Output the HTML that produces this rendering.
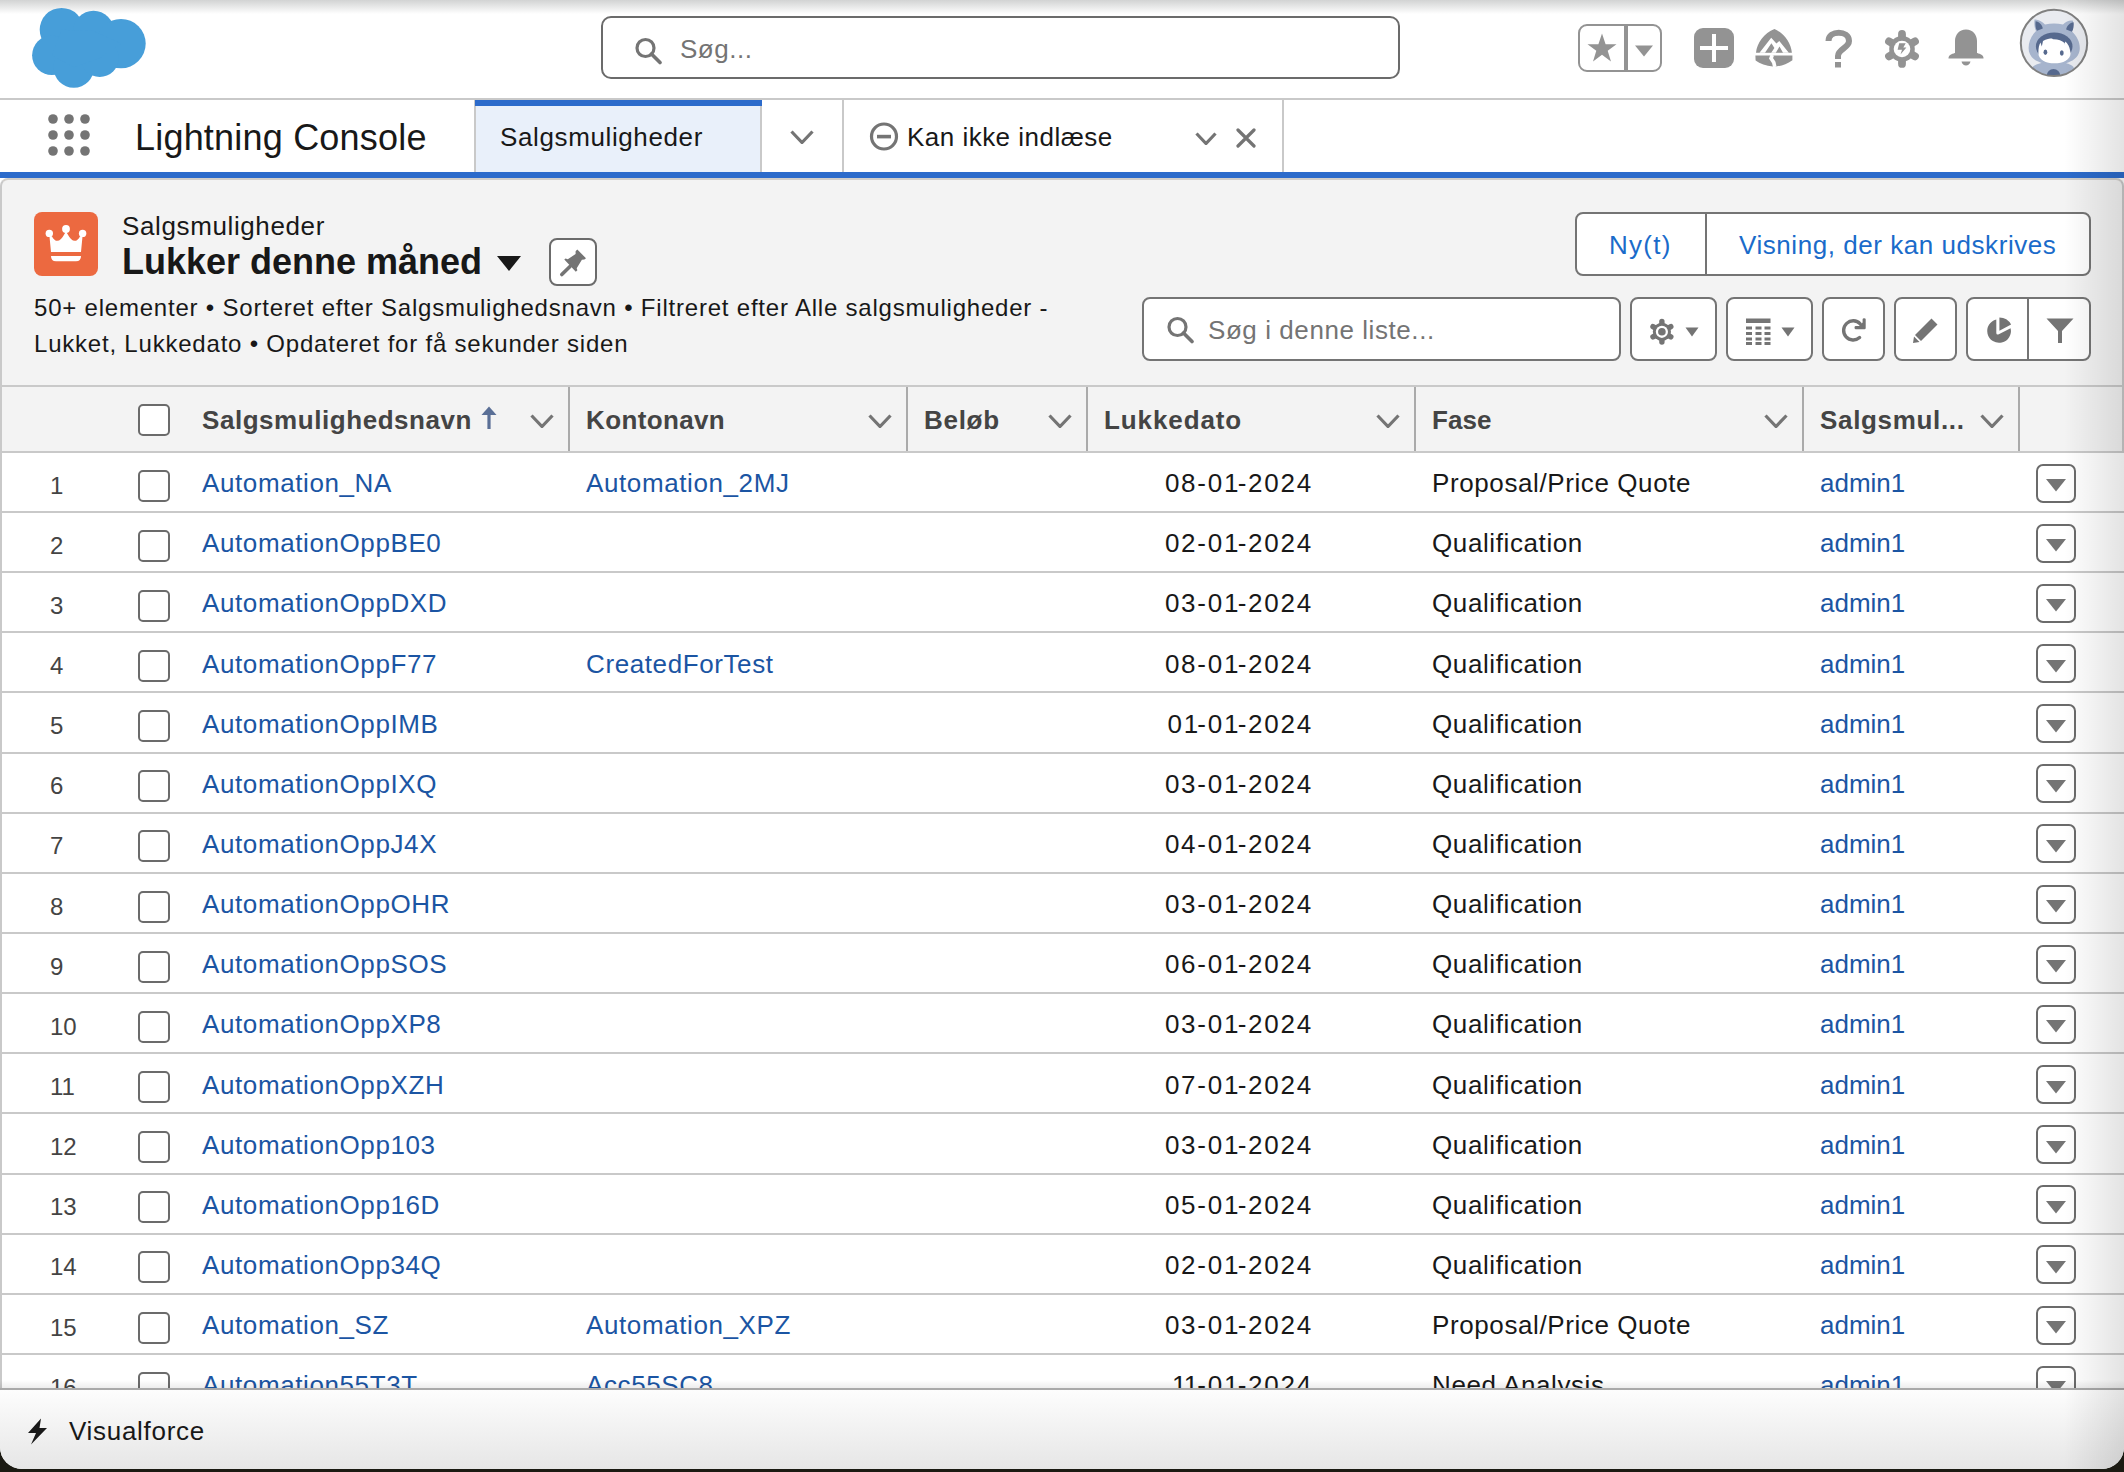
<!DOCTYPE html><html><head><meta charset="utf-8"><style>
*{margin:0;padding:0;box-sizing:border-box}
html,body{width:2124px;height:1472px;overflow:hidden;background:#1b1a12}
body{position:relative;font-family:"Liberation Sans",sans-serif;color:#181818}
.a{position:absolute}
.t{position:absolute;white-space:nowrap}
#win{position:absolute;left:0;top:0;width:2124px;height:1469px;background:#fff;border-radius:0 0 22px 22px;overflow:hidden}
#topshade{position:absolute;left:0;top:0;width:2124px;height:14px;background:linear-gradient(#d2d3d3,rgba(255,255,255,0))}
#rightshade{position:absolute;right:0;top:0;width:60px;height:1469px;background:linear-gradient(90deg,rgba(0,0,0,0),rgba(0,0,0,.11));pointer-events:none}
.gline{position:absolute;background:#c9c9c9}
.btn{position:absolute;background:#fff;border:2px solid #747474;border-radius:8px}
.cb{position:absolute;width:32px;height:32px;border:2px solid #6b6b6b;border-radius:5px;background:#fff}
.hd{position:absolute;font-weight:bold;font-size:26px;color:#444;line-height:30px;top:405px;letter-spacing:0.55px;white-space:nowrap}
.link{color:#1b55a3}
.cell{position:absolute;font-size:26px;line-height:30px;white-space:nowrap;letter-spacing:0.6px}
.num{position:absolute;font-size:24px;line-height:30px;color:#444}
.rbtn{position:absolute;left:2036px;width:40px;height:39px;border:2px solid #6b6b6b;border-radius:7px;background:#fff}
</style></head><body><div id="win">
<div id="topshade"></div>
<svg class="a" style="left:0;top:0" width="160" height="96" viewBox="0 0 160 96"><g fill="#479ed9">
<circle cx="61.6" cy="29.8" r="21.9"/><circle cx="93.5" cy="31.1" r="20.4"/><circle cx="121" cy="43.6" r="24.7"/>
<circle cx="51.9" cy="55.3" r="19.8"/><circle cx="73.8" cy="67.3" r="20.4"/><circle cx="99.7" cy="58" r="19"/>
<polygon points="61.6,29.8 93.5,31.1 121,43.6 99.7,58 73.8,67.3 51.9,55.3"/></g></svg>
<div class="a" style="left:601px;top:16px;width:799px;height:63px;border:2px solid #6b6b6b;border-radius:10px;background:#fff"></div>
<svg class="a" style="left:634px;top:37px" width="30" height="28" viewBox="0 0 30 28"><circle cx="11.5" cy="11" r="8.5" fill="none" stroke="#747474" stroke-width="3.2"/><path d="M17.5 17 L26 25.5" stroke="#747474" stroke-width="3.6" stroke-linecap="round"/></svg>
<div class="t" style="left:680px;top:34px;font-size:26px;line-height:30px;color:#747474;letter-spacing:0.5px">Søg...</div>
<div class="a" style="left:1578px;top:24px;width:84px;height:48px;border:2px solid #939393;border-radius:9px;background:#fff"></div>
<div class="a" style="left:1624px;top:25px;width:4px;height:46px;background:#939393"></div>
<svg class="a" style="left:1586px;top:32px" width="32" height="32" viewBox="0 0 32 32"><path fill="#939393" d="M16 1.5 L19.6 12.3 L30.5 12.3 L21.7 18.8 L25 29.5 L16 22.8 L7 29.5 L10.3 18.8 L1.5 12.3 L12.4 12.3 Z"/></svg>
<svg class="a" style="left:1634px;top:45px" width="20" height="12" viewBox="0 0 20 12"><path fill="#939393" d="M1 0.5 H19 L10 11.5 Z"/></svg>
<div class="a" style="left:1694px;top:28px;width:40px;height:40px;border-radius:9px;background:#939393"></div>
<div class="a" style="left:1700px;top:46px;width:28px;height:4px;background:#fff"></div>
<div class="a" style="left:1712px;top:34px;width:4px;height:28px;background:#fff"></div>
<svg class="a" style="left:1750px;top:24px" width="48" height="48" viewBox="0 0 48 48">
<path fill="#939393" d="M6 28.7 C7 19 14 9 24.5 5 C34 9 41 19 41.9 28.7 Z M5.4 31.6 H42.4 V36.2 C37 40 32 42 26 42.4 H23 C16 42 10 40 5.6 36.5 Z"/>
<path fill="#fff" d="M9.5 28.7 L21.2 13.8 L26.4 19.6 L29.3 17 L38.8 28.7 Z"/>
<path fill="#939393" d="M15 28.7 L21.4 19.2 L24.4 24 L21.2 28.7 Z M25.8 28.7 L29.5 22.6 L33 28.7 Z"/>
<path fill="none" stroke="#fff" stroke-width="3.6" d="M22.3 31 L21 34.2 L23.8 38.5 L24.8 43"/></svg>
<svg class="a" style="left:1824px;top:28px" width="30" height="40" viewBox="0 0 30 40"><path fill="none" stroke="#939393" stroke-width="6" d="M4.5 13 C4.5 2 25 2 25 13 C25 20 14 21 14 28 V31"/><rect x="11" y="34" width="6" height="5.5" fill="#939393"/></svg>
<svg class="a" style="left:1878px;top:24px" width="48" height="48" viewBox="0 0 48 48">
<g stroke="#939393" stroke-width="7.8" stroke-linecap="round"><line x1="24" y1="24.9" x2="24.00" y2="9.90"/><line x1="24" y1="24.9" x2="36.99" y2="17.40"/><line x1="24" y1="24.9" x2="36.99" y2="32.40"/><line x1="24" y1="24.9" x2="24.00" y2="39.90"/><line x1="24" y1="24.9" x2="11.01" y2="32.40"/><line x1="24" y1="24.9" x2="11.01" y2="17.40"/></g>
<circle cx="24" cy="24.9" r="12.8" fill="#939393"/>
<circle cx="24" cy="25" r="8.3" fill="#fff"/>
<path fill="#939393" d="M21.2 19.2 H27.7 L25.3 23.5 H28.4 L22.5 30.6 L24 25.8 H19.6 Z"/></svg>
<svg class="a" style="left:1946px;top:29px" width="40" height="40" viewBox="0 0 40 40"><path fill="#939393" d="M20 0.5 C27 0.5 31 6 31 12 V24 C31 24 33 24.5 35 25.5 C37 26.5 37.5 28 37.5 29 V29.5 H2.5 V29 C2.5 28 3 26.5 5 25.5 C7 24.5 9 24 9 24 V12 C9 6 13 0.5 20 0.5 Z M15.5 32.5 H24.5 C24 35 22 36.5 20 36.5 C18 36.5 16 35 15.5 32.5 Z"/></svg>
<svg class="a" style="left:2016px;top:6px" width="76" height="76" viewBox="0 0 76 76">
<defs><clipPath id="avc"><circle cx="38" cy="36.9" r="33"/></clipPath></defs>
<circle cx="38" cy="36.9" r="33" fill="#e9ebf0"/>
<g clip-path="url(#avc)">
<path fill="#a6b4cd" d="M14 80 L17 60.5 C24 54 52 54 57.5 61 L62 80 Z"/>
<path fill="#a6b4cd" d="M18.5 13.5 C22 13 26 15.5 29 18.5 C35 17 41 17 47 18.5 C50 15.5 54 14 57 14.8 C57.5 19 56.5 23 55.5 25 C61 30 63.8 36 63.8 42 C63.8 53 53 58.5 38.2 58.5 C23 58.5 12.6 53 12.6 42 C12.6 36 15 30 20 25 C18.5 22 18 18 18.5 13.5 Z"/>
<path fill="#56698e" d="M19.6 15.2 C23 15.5 26.5 19 26.8 22.5 L21 24.8 C19.5 22 19.2 18.5 19.6 15.2 Z M57.6 16.2 C54 16.5 50.5 20 50.2 23.5 L56 25.8 C57.5 23 58 19.5 57.6 16.2 Z"/>
<ellipse cx="38.2" cy="40.5" rx="18.3" ry="14" fill="#56698e"/>
<path fill="#fff" d="M22.4 47 C22.4 42 23 39 24.5 36.5 L25.8 40.5 L27 35 C30 33 34 32.5 36 32.5 C37.5 33.5 38.5 34.5 40 35.8 C38.5 35.5 37.5 34 36.5 33.2 C42 33 46 34.5 48.5 37 L48 38.8 L49.5 35.5 C52 38 53.5 41 54 44 L54.6 47 C54.6 54 47 57.3 38.5 57.3 C30 57.3 22.4 54 22.4 47 Z"/>
<ellipse cx="29.4" cy="46.2" rx="1.9" ry="2.7" fill="#56698e"/><ellipse cx="45.8" cy="47" rx="1.9" ry="2.7" fill="#56698e"/>
<circle cx="37.5" cy="69.8" r="6.8" fill="#56698e"/>
</g>
<circle cx="38" cy="36.9" r="33.2" fill="none" stroke="#808080" stroke-width="2"/></svg>
<div class="gline" style="left:0;top:98px;width:2124px;height:2px"></div>
<svg class="a" style="left:48px;top:114px" width="44" height="44" viewBox="0 0 44 44"><g fill="#747474"><circle cx="5" cy="5" r="4.8"/><circle cx="5" cy="21" r="4.8"/><circle cx="5" cy="37" r="4.8"/><circle cx="21" cy="5" r="4.8"/><circle cx="21" cy="21" r="4.8"/><circle cx="21" cy="37" r="4.8"/><circle cx="37" cy="5" r="4.8"/><circle cx="37" cy="21" r="4.8"/><circle cx="37" cy="37" r="4.8"/></g></svg>
<div class="t" style="left:135px;top:118px;font-size:36px;line-height:40px;color:#181818;letter-spacing:0.2px">Lightning Console</div>
<div class="a" style="left:474px;top:100px;width:288px;height:72px;background:#e9f0fa;border-left:2px solid #c9c9c9;border-right:2px solid #c9c9c9"></div>
<div class="a" style="left:475px;top:100px;width:287px;height:6px;background:#2c6bcb"></div>
<div class="t" style="left:500px;top:122px;font-size:26px;line-height:30px;letter-spacing:0.62px">Salgsmuligheder</div>
<svg class="a" style="left:790px;top:130px" width="24" height="14" viewBox="0 0 24 14"><path d="M1.5 1.5 L12.0 12.5 L22.5 1.5" fill="none" stroke="#747474" stroke-width="3.2"/></svg>
<div class="gline" style="left:842px;top:100px;width:2px;height:72px"></div>
<svg class="a" style="left:868px;top:121px" width="32" height="32" viewBox="0 0 32 32"><circle cx="16" cy="15.5" r="12.5" fill="none" stroke="#747474" stroke-width="3.2"/><rect x="9" y="13.8" width="14" height="3.6" fill="#747474"/></svg>
<div class="t" style="left:907px;top:122px;font-size:26px;line-height:30px;letter-spacing:0.48px">Kan ikke indlæse</div>
<svg class="a" style="left:1195px;top:132px" width="22" height="13" viewBox="0 0 22 13"><path d="M1.5 1.5 L11.0 11.5 L20.5 1.5" fill="none" stroke="#747474" stroke-width="3.2"/></svg>
<svg class="a" style="left:1236px;top:128px" width="20" height="20" viewBox="0 0 20 20"><path d="M2 2 L18 18 M18 2 L2 18" stroke="#747474" stroke-width="3.2" stroke-linecap="round"/></svg>
<div class="gline" style="left:1282px;top:100px;width:2px;height:72px"></div>
<div class="a" style="left:0;top:172px;width:2124px;height:6px;background:#2c6bcb"></div>
<div class="a" style="left:0;top:178px;width:2124px;height:1212px;background:#f3f3f3;border:2px solid #c9c9c9;border-top-color:#d1ceca;border-radius:8px 8px 0 0"></div>
<div class="a" style="left:34px;top:212px;width:64px;height:64px;background:#ec6940;border-radius:8px"></div>
<svg class="a" style="left:34px;top:212px" width="64" height="64" viewBox="0 0 64 64"><g fill="#fff"><circle cx="15.3" cy="21.4" r="3.7"/><circle cx="32" cy="17" r="3.9"/><circle cx="48.6" cy="21.4" r="3.7"/><path d="M15.4 23.5 L17 40 H47 L48.6 23.5 L46 24.4 Q40.3 34.6 33.2 21.4 L32 19 L30.8 21.4 Q23.7 34.6 18 24.4 Z"/><path d="M17 44 H47 Q47 49.3 42 49.3 H22 Q17 49.3 17 44 Z"/></g></svg>
<div class="t" style="left:122px;top:211px;font-size:26px;line-height:30px;letter-spacing:0.62px">Salgsmuligheder</div>
<div class="t" style="left:122px;top:242px;font-size:36px;line-height:40px;font-weight:bold;color:#181818">Lukker denne måned</div>
<svg class="a" style="left:496px;top:255px" width="26" height="17" viewBox="0 0 26 17"><path fill="#181818" d="M1 1 H25 L13 16 Z"/></svg>
<div class="btn" style="left:549px;top:238px;width:48px;height:48px;border-color:#6b6b6b"></div>
<svg class="a" style="left:545px;top:235px" width="56" height="56" viewBox="0 0 56 56"><path fill="#747474" d="M19.3 24.6 L20.5 23.4 L22.8 24.3 L30.6 19 L30.6 16.3 L32.3 14.6 L41 23.2 L39.4 24.6 L36.9 24.8 L31.7 33.2 L32.4 35.3 L30.8 36.8 Z"/><path d="M16.8 39.6 L25 31.4" stroke="#747474" stroke-width="3.6" stroke-linecap="round"/></svg>
<div class="t" style="left:34px;top:293px;font-size:24px;line-height:30px;letter-spacing:0.79px">50+ elementer • Sorteret efter Salgsmulighedsnavn • Filtreret efter Alle salgsmuligheder -</div>
<div class="t" style="left:34px;top:329px;font-size:24px;line-height:30px;letter-spacing:0.79px">Lukket, Lukkedato • Opdateret for få sekunder siden</div>
<div class="a" style="left:1575px;top:212px;width:516px;height:64px;background:#fff;border:2px solid #747474;border-radius:8px"></div>
<div class="a" style="left:1705px;top:213px;width:2px;height:62px;background:#747474"></div>
<div class="t" style="left:1609px;top:230px;font-size:26px;line-height:30px;color:#1a6bca;letter-spacing:1.25px">Ny(t)</div>
<div class="t" style="left:1739px;top:230px;font-size:26px;line-height:30px;color:#1a6bca;letter-spacing:0.55px">Visning, der kan udskrives</div>
<div class="a" style="left:1142px;top:297px;width:479px;height:64px;background:#fff;border:2px solid #747474;border-radius:8px"></div>
<svg class="a" style="left:1166px;top:316px" width="30" height="28" viewBox="0 0 30 28"><circle cx="11.5" cy="11" r="8.5" fill="none" stroke="#747474" stroke-width="3.2"/><path d="M17.5 17 L26 25.5" stroke="#747474" stroke-width="3.6" stroke-linecap="round"/></svg>
<div class="t" style="left:1208px;top:315px;font-size:26px;line-height:30px;color:#747474;letter-spacing:0.57px">Søg i denne liste...</div>
<div class="btn" style="left:1630px;top:297px;width:87px;height:64px"></div>
<div class="btn" style="left:1726px;top:297px;width:87px;height:64px"></div>
<div class="btn" style="left:1822px;top:297px;width:63px;height:64px"></div>
<div class="btn" style="left:1894px;top:297px;width:63px;height:64px"></div>
<div class="btn" style="left:1966px;top:297px;width:125px;height:64px"></div>
<div class="a" style="left:2027px;top:298px;width:2px;height:62px;background:#747474"></div>
<svg class="a" style="left:1640px;top:310px" width="44" height="44" viewBox="0 0 44 44"><g stroke="#747474" stroke-width="5.4" stroke-linecap="round"><line x1="21.9" y1="21.8" x2="21.90" y2="11.50"/><line x1="21.9" y1="21.8" x2="30.82" y2="16.65"/><line x1="21.9" y1="21.8" x2="30.82" y2="26.95"/><line x1="21.9" y1="21.8" x2="21.90" y2="32.10"/><line x1="21.9" y1="21.8" x2="12.98" y2="26.95"/><line x1="21.9" y1="21.8" x2="12.98" y2="16.65"/></g>
<circle cx="21.9" cy="21.8" r="9.1" fill="#747474"/><circle cx="21.9" cy="21.8" r="6.1" fill="#fff"/><circle cx="21.9" cy="21.8" r="3.8" fill="#747474"/></svg>
<svg class="a" style="left:1685px;top:327px" width="14" height="10" viewBox="0 0 14 10"><path fill="#747474" d="M0.5 0.5 H13.5 L7 9.5 Z"/></svg>
<svg class="a" style="left:1746px;top:318px" width="25" height="28" viewBox="0 0 25 28"><g fill="#747474"><rect x="0" y="0.5" width="24.5" height="4.5"/><rect x="0" y="8.5" width="6" height="3"/><rect x="9.5" y="8.5" width="6" height="3"/><rect x="18.5" y="8.5" width="6" height="3"/><rect x="0" y="14" width="6" height="3"/><rect x="9.5" y="14" width="6" height="3"/><rect x="18.5" y="14" width="6" height="3"/><rect x="0" y="19.5" width="6" height="3"/><rect x="9.5" y="19.5" width="6" height="3"/><rect x="18.5" y="19.5" width="6" height="3"/><rect x="0" y="24" width="6" height="3"/><rect x="9.5" y="24" width="6" height="3"/><rect x="18.5" y="24" width="6" height="3"/></g></svg>
<svg class="a" style="left:1781px;top:327px" width="14" height="10" viewBox="0 0 14 10"><path fill="#747474" d="M0.5 0.5 H13.5 L7 9.5 Z"/></svg>
<svg class="a" style="left:1834px;top:308px" width="42" height="42" viewBox="0 0 42 42"><path d="M26.2 15.8 A9.6 9.6 0 1 0 25.6 29.6" fill="none" stroke="#747474" stroke-width="3.4" stroke-linecap="round"/><path fill="#747474" d="M28.6 11.2 Q28.6 10.2 30.1 10.2 Q31.7 10.2 31.7 11.2 V20 Q31.7 21.2 30.5 21.2 H21.5 Q20.5 21.2 20.5 19.6 Q20.5 18 21.5 18 H25 L28.6 14.5 Z"/></svg>
<svg class="a" style="left:1912px;top:316px" width="28" height="28" viewBox="0 0 28 28"><path fill="#747474" d="M19.5 2.5 L25.5 8.5 L9 25 L3 19 Z M2 20.5 L7.5 26 L1 27 Z"/></svg>
<svg class="a" style="left:1980px;top:308px" width="42" height="42" viewBox="0 0 42 42"><path fill="#747474" d="M16.3 11.4 L16.3 25 Q16.5 27.3 18.8 26.2 L30.6 20.2 A11.85 11.85 0 1 1 16.3 11.4 Z M19.4 9.4 V22.8 L31.1 16.5 A13.3 13.3 0 0 0 19.4 9.4 Z"/></svg>
<svg class="a" style="left:2046px;top:318px" width="28" height="26" viewBox="0 0 28 26"><path fill="#747474" d="M0.5 0.5 H27.5 L16 13 V25 H12 V13 Z"/></svg>
<div class="gline" style="left:0;top:385px;width:2124px;height:2px"></div>
<div class="gline" style="left:0;top:451px;width:2124px;height:2px"></div>
<div class="a" style="left:568px;top:387px;width:2px;height:64px;background:#aaaaaa"></div>
<div class="a" style="left:906px;top:387px;width:2px;height:64px;background:#aaaaaa"></div>
<div class="a" style="left:1086px;top:387px;width:2px;height:64px;background:#aaaaaa"></div>
<div class="a" style="left:1414px;top:387px;width:2px;height:64px;background:#aaaaaa"></div>
<div class="a" style="left:1802px;top:387px;width:2px;height:64px;background:#aaaaaa"></div>
<div class="a" style="left:2018px;top:387px;width:2px;height:64px;background:#aaaaaa"></div>
<div class="cb" style="left:138px;top:404px"></div>
<div class="hd" style="left:202px">Salgsmulighedsnavn</div>
<svg class="a" style="left:480px;top:406px" width="18" height="24" viewBox="0 0 18 24"><path d="M9 4 V23" stroke="#5a6f96" stroke-width="3.2"/><path fill="#5a6f96" d="M9 0.5 L16.5 9 H1.5 Z"/></svg>
<svg class="a" style="left:530px;top:414px" width="24" height="14" viewBox="0 0 24 14"><path d="M1.5 1.5 L12.0 12.5 L22.5 1.5" fill="none" stroke="#747474" stroke-width="3.2"/></svg>
<div class="hd" style="left:586px;letter-spacing:0.37px">Kontonavn</div>
<svg class="a" style="left:868px;top:414px" width="24" height="14" viewBox="0 0 24 14"><path d="M1.5 1.5 L12.0 12.5 L22.5 1.5" fill="none" stroke="#747474" stroke-width="3.2"/></svg>
<div class="hd" style="left:924px;letter-spacing:0.72px">Beløb</div>
<svg class="a" style="left:1048px;top:414px" width="24" height="14" viewBox="0 0 24 14"><path d="M1.5 1.5 L12.0 12.5 L22.5 1.5" fill="none" stroke="#747474" stroke-width="3.2"/></svg>
<div class="hd" style="left:1104px;letter-spacing:0.9px">Lukkedato</div>
<svg class="a" style="left:1376px;top:414px" width="24" height="14" viewBox="0 0 24 14"><path d="M1.5 1.5 L12.0 12.5 L22.5 1.5" fill="none" stroke="#747474" stroke-width="3.2"/></svg>
<div class="hd" style="left:1432px;letter-spacing:0.1px">Fase</div>
<svg class="a" style="left:1764px;top:414px" width="24" height="14" viewBox="0 0 24 14"><path d="M1.5 1.5 L12.0 12.5 L22.5 1.5" fill="none" stroke="#747474" stroke-width="3.2"/></svg>
<div class="hd" style="left:1820px;letter-spacing:0.67px">Salgsmul...</div>
<svg class="a" style="left:1980px;top:414px" width="24" height="14" viewBox="0 0 24 14"><path d="M1.5 1.5 L12.0 12.5 L22.5 1.5" fill="none" stroke="#747474" stroke-width="3.2"/></svg>
<div class="a" style="left:2px;top:453px;width:2122px;height:935px;background:#fff"></div>
<div class="num t" style="left:50px;top:470.5px">1</div>
<div class="cb" style="left:138px;top:469.5px"></div>
<div class="cell link" style="left:202px;top:468.0px">Automation_NA</div>
<div class="cell link" style="left:586px;top:468.0px">Automation_2MJ</div>
<div class="cell" style="left:1000px;width:313px;text-align:right;top:468.0px;letter-spacing:1.77px">08-0<span style="letter-spacing:-0.85px">1</span>-2024</div>
<div class="cell" style="left:1432px;top:468.0px">Proposal/Price Quote</div>
<div class="cell link" style="left:1820px;top:468.0px;letter-spacing:0">admin1</div>
<div class="rbtn" style="top:463.5px"></div>
<svg class="a" style="left:2045px;top:478.0px" width="22" height="14" viewBox="0 0 22 14"><path fill="#747474" d="M1 1 H21 L11 13.5 Z"/></svg>
<div class="gline" style="left:0;top:511px;width:2124px;height:2px"></div>
<div class="num t" style="left:50px;top:530.6px">2</div>
<div class="cb" style="left:138px;top:529.6px"></div>
<div class="cell link" style="left:202px;top:528.1px">AutomationOppBE0</div>
<div class="cell" style="left:1000px;width:313px;text-align:right;top:528.1px;letter-spacing:1.77px">02-0<span style="letter-spacing:-0.85px">1</span>-2024</div>
<div class="cell" style="left:1432px;top:528.1px">Qualification</div>
<div class="cell link" style="left:1820px;top:528.1px;letter-spacing:0">admin1</div>
<div class="rbtn" style="top:523.6px"></div>
<svg class="a" style="left:2045px;top:538.1px" width="22" height="14" viewBox="0 0 22 14"><path fill="#747474" d="M1 1 H21 L11 13.5 Z"/></svg>
<div class="gline" style="left:0;top:571px;width:2124px;height:2px"></div>
<div class="num t" style="left:50px;top:590.8px">3</div>
<div class="cb" style="left:138px;top:589.8px"></div>
<div class="cell link" style="left:202px;top:588.3px">AutomationOppDXD</div>
<div class="cell" style="left:1000px;width:313px;text-align:right;top:588.3px;letter-spacing:1.77px">03-0<span style="letter-spacing:-0.85px">1</span>-2024</div>
<div class="cell" style="left:1432px;top:588.3px">Qualification</div>
<div class="cell link" style="left:1820px;top:588.3px;letter-spacing:0">admin1</div>
<div class="rbtn" style="top:583.8px"></div>
<svg class="a" style="left:2045px;top:598.3px" width="22" height="14" viewBox="0 0 22 14"><path fill="#747474" d="M1 1 H21 L11 13.5 Z"/></svg>
<div class="gline" style="left:0;top:631px;width:2124px;height:2px"></div>
<div class="num t" style="left:50px;top:651.0px">4</div>
<div class="cb" style="left:138px;top:650.0px"></div>
<div class="cell link" style="left:202px;top:648.5px">AutomationOppF77</div>
<div class="cell link" style="left:586px;top:648.5px">CreatedForTest</div>
<div class="cell" style="left:1000px;width:313px;text-align:right;top:648.5px;letter-spacing:1.77px">08-0<span style="letter-spacing:-0.85px">1</span>-2024</div>
<div class="cell" style="left:1432px;top:648.5px">Qualification</div>
<div class="cell link" style="left:1820px;top:648.5px;letter-spacing:0">admin1</div>
<div class="rbtn" style="top:644.0px"></div>
<svg class="a" style="left:2045px;top:658.5px" width="22" height="14" viewBox="0 0 22 14"><path fill="#747474" d="M1 1 H21 L11 13.5 Z"/></svg>
<div class="gline" style="left:0;top:691px;width:2124px;height:2px"></div>
<div class="num t" style="left:50px;top:711.1px">5</div>
<div class="cb" style="left:138px;top:710.1px"></div>
<div class="cell link" style="left:202px;top:708.6px">AutomationOppIMB</div>
<div class="cell" style="left:1000px;width:313px;text-align:right;top:708.6px;letter-spacing:1.77px">0<span style="letter-spacing:-0.85px">1</span>-0<span style="letter-spacing:-0.85px">1</span>-2024</div>
<div class="cell" style="left:1432px;top:708.6px">Qualification</div>
<div class="cell link" style="left:1820px;top:708.6px;letter-spacing:0">admin1</div>
<div class="rbtn" style="top:704.1px"></div>
<svg class="a" style="left:2045px;top:718.6px" width="22" height="14" viewBox="0 0 22 14"><path fill="#747474" d="M1 1 H21 L11 13.5 Z"/></svg>
<div class="gline" style="left:0;top:752px;width:2124px;height:2px"></div>
<div class="num t" style="left:50px;top:771.2px">6</div>
<div class="cb" style="left:138px;top:770.2px"></div>
<div class="cell link" style="left:202px;top:768.8px">AutomationOppIXQ</div>
<div class="cell" style="left:1000px;width:313px;text-align:right;top:768.8px;letter-spacing:1.77px">03-0<span style="letter-spacing:-0.85px">1</span>-2024</div>
<div class="cell" style="left:1432px;top:768.8px">Qualification</div>
<div class="cell link" style="left:1820px;top:768.8px;letter-spacing:0">admin1</div>
<div class="rbtn" style="top:764.2px"></div>
<svg class="a" style="left:2045px;top:778.8px" width="22" height="14" viewBox="0 0 22 14"><path fill="#747474" d="M1 1 H21 L11 13.5 Z"/></svg>
<div class="gline" style="left:0;top:812px;width:2124px;height:2px"></div>
<div class="num t" style="left:50px;top:831.4px">7</div>
<div class="cb" style="left:138px;top:830.4px"></div>
<div class="cell link" style="left:202px;top:828.9px">AutomationOppJ4X</div>
<div class="cell" style="left:1000px;width:313px;text-align:right;top:828.9px;letter-spacing:1.77px">04-0<span style="letter-spacing:-0.85px">1</span>-2024</div>
<div class="cell" style="left:1432px;top:828.9px">Qualification</div>
<div class="cell link" style="left:1820px;top:828.9px;letter-spacing:0">admin1</div>
<div class="rbtn" style="top:824.4px"></div>
<svg class="a" style="left:2045px;top:838.9px" width="22" height="14" viewBox="0 0 22 14"><path fill="#747474" d="M1 1 H21 L11 13.5 Z"/></svg>
<div class="gline" style="left:0;top:872px;width:2124px;height:2px"></div>
<div class="num t" style="left:50px;top:891.5px">8</div>
<div class="cb" style="left:138px;top:890.5px"></div>
<div class="cell link" style="left:202px;top:889.0px">AutomationOppOHR</div>
<div class="cell" style="left:1000px;width:313px;text-align:right;top:889.0px;letter-spacing:1.77px">03-0<span style="letter-spacing:-0.85px">1</span>-2024</div>
<div class="cell" style="left:1432px;top:889.0px">Qualification</div>
<div class="cell link" style="left:1820px;top:889.0px;letter-spacing:0">admin1</div>
<div class="rbtn" style="top:884.5px"></div>
<svg class="a" style="left:2045px;top:899.0px" width="22" height="14" viewBox="0 0 22 14"><path fill="#747474" d="M1 1 H21 L11 13.5 Z"/></svg>
<div class="gline" style="left:0;top:932px;width:2124px;height:2px"></div>
<div class="num t" style="left:50px;top:951.7px">9</div>
<div class="cb" style="left:138px;top:950.7px"></div>
<div class="cell link" style="left:202px;top:949.2px">AutomationOppSOS</div>
<div class="cell" style="left:1000px;width:313px;text-align:right;top:949.2px;letter-spacing:1.77px">06-0<span style="letter-spacing:-0.85px">1</span>-2024</div>
<div class="cell" style="left:1432px;top:949.2px">Qualification</div>
<div class="cell link" style="left:1820px;top:949.2px;letter-spacing:0">admin1</div>
<div class="rbtn" style="top:944.7px"></div>
<svg class="a" style="left:2045px;top:959.2px" width="22" height="14" viewBox="0 0 22 14"><path fill="#747474" d="M1 1 H21 L11 13.5 Z"/></svg>
<div class="gline" style="left:0;top:992px;width:2124px;height:2px"></div>
<div class="num t" style="left:50px;top:1011.9px">10</div>
<div class="cb" style="left:138px;top:1010.9px"></div>
<div class="cell link" style="left:202px;top:1009.4px">AutomationOppXP8</div>
<div class="cell" style="left:1000px;width:313px;text-align:right;top:1009.4px;letter-spacing:1.77px">03-0<span style="letter-spacing:-0.85px">1</span>-2024</div>
<div class="cell" style="left:1432px;top:1009.4px">Qualification</div>
<div class="cell link" style="left:1820px;top:1009.4px;letter-spacing:0">admin1</div>
<div class="rbtn" style="top:1004.9px"></div>
<svg class="a" style="left:2045px;top:1019.4px" width="22" height="14" viewBox="0 0 22 14"><path fill="#747474" d="M1 1 H21 L11 13.5 Z"/></svg>
<div class="gline" style="left:0;top:1052px;width:2124px;height:2px"></div>
<div class="num t" style="left:50px;top:1072.0px">11</div>
<div class="cb" style="left:138px;top:1071.0px"></div>
<div class="cell link" style="left:202px;top:1069.5px">AutomationOppXZH</div>
<div class="cell" style="left:1000px;width:313px;text-align:right;top:1069.5px;letter-spacing:1.77px">07-0<span style="letter-spacing:-0.85px">1</span>-2024</div>
<div class="cell" style="left:1432px;top:1069.5px">Qualification</div>
<div class="cell link" style="left:1820px;top:1069.5px;letter-spacing:0">admin1</div>
<div class="rbtn" style="top:1065.0px"></div>
<svg class="a" style="left:2045px;top:1079.5px" width="22" height="14" viewBox="0 0 22 14"><path fill="#747474" d="M1 1 H21 L11 13.5 Z"/></svg>
<div class="gline" style="left:0;top:1112px;width:2124px;height:2px"></div>
<div class="num t" style="left:50px;top:1132.2px">12</div>
<div class="cb" style="left:138px;top:1131.2px"></div>
<div class="cell link" style="left:202px;top:1129.7px">AutomationOpp103</div>
<div class="cell" style="left:1000px;width:313px;text-align:right;top:1129.7px;letter-spacing:1.77px">03-0<span style="letter-spacing:-0.85px">1</span>-2024</div>
<div class="cell" style="left:1432px;top:1129.7px">Qualification</div>
<div class="cell link" style="left:1820px;top:1129.7px;letter-spacing:0">admin1</div>
<div class="rbtn" style="top:1125.2px"></div>
<svg class="a" style="left:2045px;top:1139.7px" width="22" height="14" viewBox="0 0 22 14"><path fill="#747474" d="M1 1 H21 L11 13.5 Z"/></svg>
<div class="gline" style="left:0;top:1173px;width:2124px;height:2px"></div>
<div class="num t" style="left:50px;top:1192.3px">13</div>
<div class="cb" style="left:138px;top:1191.3px"></div>
<div class="cell link" style="left:202px;top:1189.8px">AutomationOpp16D</div>
<div class="cell" style="left:1000px;width:313px;text-align:right;top:1189.8px;letter-spacing:1.77px">05-0<span style="letter-spacing:-0.85px">1</span>-2024</div>
<div class="cell" style="left:1432px;top:1189.8px">Qualification</div>
<div class="cell link" style="left:1820px;top:1189.8px;letter-spacing:0">admin1</div>
<div class="rbtn" style="top:1185.3px"></div>
<svg class="a" style="left:2045px;top:1199.8px" width="22" height="14" viewBox="0 0 22 14"><path fill="#747474" d="M1 1 H21 L11 13.5 Z"/></svg>
<div class="gline" style="left:0;top:1233px;width:2124px;height:2px"></div>
<div class="num t" style="left:50px;top:1252.4px">14</div>
<div class="cb" style="left:138px;top:1251.4px"></div>
<div class="cell link" style="left:202px;top:1249.9px">AutomationOpp34Q</div>
<div class="cell" style="left:1000px;width:313px;text-align:right;top:1249.9px;letter-spacing:1.77px">02-0<span style="letter-spacing:-0.85px">1</span>-2024</div>
<div class="cell" style="left:1432px;top:1249.9px">Qualification</div>
<div class="cell link" style="left:1820px;top:1249.9px;letter-spacing:0">admin1</div>
<div class="rbtn" style="top:1245.4px"></div>
<svg class="a" style="left:2045px;top:1259.9px" width="22" height="14" viewBox="0 0 22 14"><path fill="#747474" d="M1 1 H21 L11 13.5 Z"/></svg>
<div class="gline" style="left:0;top:1293px;width:2124px;height:2px"></div>
<div class="num t" style="left:50px;top:1312.6px">15</div>
<div class="cb" style="left:138px;top:1311.6px"></div>
<div class="cell link" style="left:202px;top:1310.1px">Automation_SZ</div>
<div class="cell link" style="left:586px;top:1310.1px">Automation_XPZ</div>
<div class="cell" style="left:1000px;width:313px;text-align:right;top:1310.1px;letter-spacing:1.77px">03-0<span style="letter-spacing:-0.85px">1</span>-2024</div>
<div class="cell" style="left:1432px;top:1310.1px">Proposal/Price Quote</div>
<div class="cell link" style="left:1820px;top:1310.1px;letter-spacing:0">admin1</div>
<div class="rbtn" style="top:1305.6px"></div>
<svg class="a" style="left:2045px;top:1320.1px" width="22" height="14" viewBox="0 0 22 14"><path fill="#747474" d="M1 1 H21 L11 13.5 Z"/></svg>
<div class="gline" style="left:0;top:1353px;width:2124px;height:2px"></div>
<div class="num t" style="left:50px;top:1372.8px">16</div>
<div class="cb" style="left:138px;top:1371.8px"></div>
<div class="cell link" style="left:202px;top:1370.2px">Automation55T3T</div>
<div class="cell link" style="left:586px;top:1370.2px">Acc55SC8</div>
<div class="cell" style="left:1000px;width:313px;text-align:right;top:1370.2px;letter-spacing:1.77px"><span style="letter-spacing:-0.85px">1</span><span style="letter-spacing:-0.85px">1</span>-0<span style="letter-spacing:-0.85px">1</span>-2024</div>
<div class="cell" style="left:1432px;top:1370.2px">Need Analysis</div>
<div class="cell link" style="left:1820px;top:1370.2px;letter-spacing:0">admin1</div>
<div class="rbtn" style="top:1365.8px"></div>
<svg class="a" style="left:2045px;top:1380.2px" width="22" height="14" viewBox="0 0 22 14"><path fill="#747474" d="M1 1 H21 L11 13.5 Z"/></svg>
<div class="gline" style="left:0;top:1413px;width:2124px;height:2px"></div>
<div class="a" style="left:0;top:1380px;width:2124px;height:8px;background:linear-gradient(rgba(0,0,0,0),rgba(0,0,0,.07))"></div>
<div class="a" style="left:0;top:1388px;width:2124px;height:2px;background:#a9a9a9"></div>
<div class="a" style="left:0;top:1390px;width:2124px;height:79px;background:linear-gradient(#fdfdfd,#e6e6e6)"></div>
<svg class="a" style="left:27px;top:1418px" width="22" height="27" viewBox="0 0 22 27"><path fill="#181818" d="M14 0.5 L1 15 H9 L4 26.5 L20 10 H12.5 Z"/></svg>
<div class="t" style="left:69px;top:1416px;font-size:26px;line-height:30px;letter-spacing:0.7px">Visualforce</div>
<div id="rightshade"></div>
</div></body></html>
